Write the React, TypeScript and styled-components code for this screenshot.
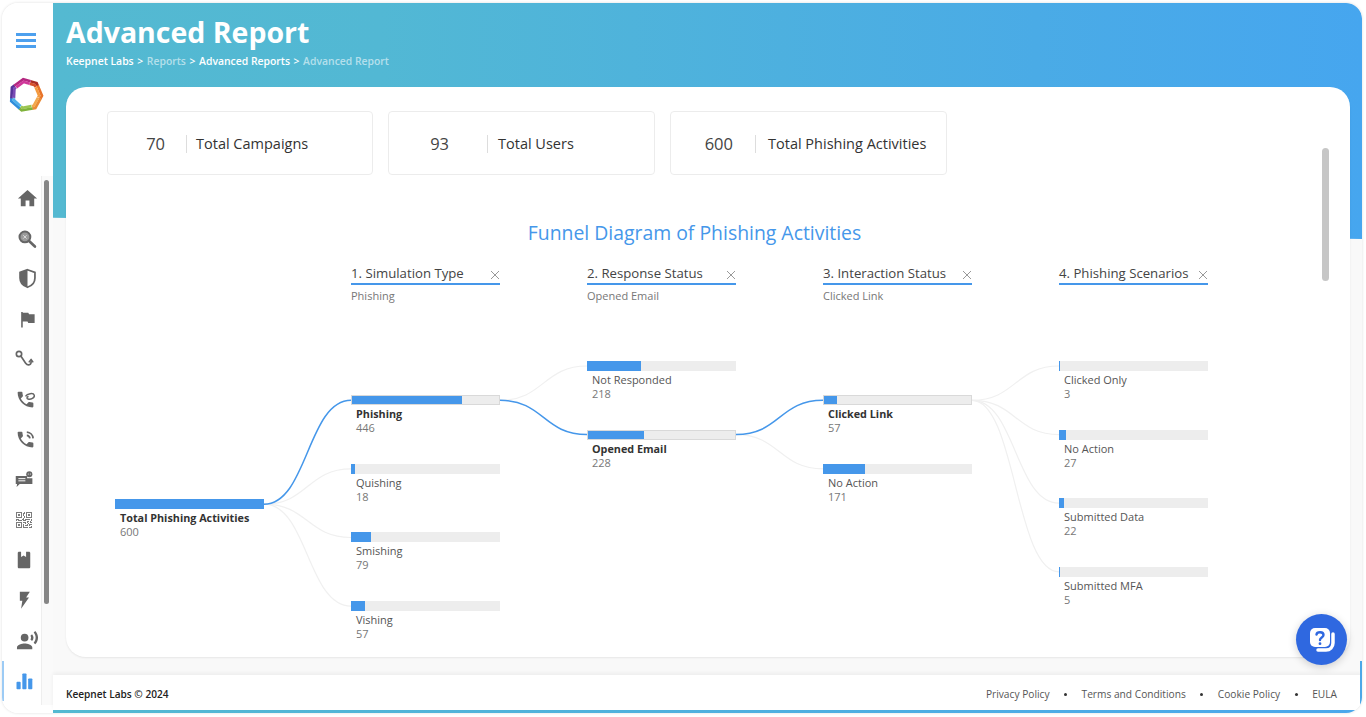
import React from "react";
import styled, { createGlobalStyle } from "styled-components";
import { MdHome, MdPhoneInTalk, MdRecordVoiceOver } from "react-icons/md";
import { BsQrCode } from "react-icons/bs";

const Global = createGlobalStyle`
  html, body { margin: 0; padding: 0; background: #fff; height: 100%; overflow: hidden; }
  * { box-sizing: border-box; }
  body { font-family: "Open Sans", "Noto Sans", sans-serif; }
`;

const UI = `"Open Sans", "Noto Sans", sans-serif`;
const Blue = "#4597ea";

const Screen = styled.div`
  width: 1366px;
  height: 717px;
  padding: 3px 4px 4px 2px;
`;
const Frame = styled.div`
  position: relative;
  display: flex;
  height: 710px;
  background: #fff;
  border-radius: 16px;
  box-shadow: 0 0 3px rgba(0, 0, 0, 0.14);
  overflow: hidden;
`;
const Sidebar = styled.aside`
  position: relative;
  flex: 0 0 51px;
  display: flex;
  flex-direction: column;
  background: #fff;
`;
const MenuButton = styled.button`
  display: flex;
  flex-direction: column;
  gap: 3.5px;
  width: 20px;
  margin: 30px 0 0 14px;
  padding: 0;
  border: 0;
  background: none;
`;
const MenuLine = styled.span`
  display: block;
  height: 2.5px;
  background: #4da0ee;
`;
const LogoBox = styled.div`
  margin: 28px 0 0 5px;
  width: 38px;
  height: 38px;
`;
const Nav = styled.nav`
  position: relative;
  display: flex;
  flex-direction: column;
  margin-top: 65px;
  height: 527px;
  width: 44px;
`;
const NavItem = styled.div<{ $active?: boolean; $shift: number }>`
  flex: 0 0 40.2px;
  display: flex;
  align-items: center;
  justify-content: center;
  padding-left: ${(p) => p.$shift * 2}px;
  color: ${(p) => (p.$active ? Blue : "#666")};
  position: relative;
  ${(p) => p.$active && `&::before { content: ""; position: absolute; left: 0; top: 0; bottom: 0; width: 2px; background: #9ccbf5; }`}
`;
const SideTrack = styled.div`
  position: absolute;
  left: 39px;
  top: 173px;
  bottom: 8px;
  width: 12px;
  background: #fafafa;
  border-left: 1px solid #eee;
`;
const SideThumb = styled.div`
  position: absolute;
  left: 42px;
  top: 177px;
  width: 5px;
  height: 424px;
  border-radius: 3px;
  background: #868686;
`;
const Main = styled.main`
  position: relative;
  flex: 1;
  display: flex;
  flex-direction: column;
  min-width: 0;
  background: #f9f9f9;
`;
const Banner = styled.div`
  position: absolute;
  left: 0;
  top: 0;
  right: 0;
  height: 236px;
  background: linear-gradient(90deg, #54b9d1 0%, #52b8d4 25%, #4aabe6 75%, #46a6ef 100%);
  border-top-right-radius: 15px;
  clip-path: polygon(0 0, 100% 0, 100% 100%, 0 91%);
`;
const Heading = styled.header`
  position: relative;
  flex: 0 0 84px;
  padding: 11px 0 0 13px;
  color: #fff;
`;
const Title = styled.h1`
  margin: 0;
  font: 700 28.5px/36px ${UI};
`;
const Crumbs = styled.div`
  display: flex;
  align-items: center;
  gap: 3.6px;
  margin-top: 4px;
  font: 600 10.4px/14px ${UI};
`;
const Crumb = styled.span<{ $muted?: boolean }>`
  color: ${(p) => (p.$muted ? "rgba(255,255,255,.58)" : "#fff")};
`;
const Card = styled.section`
  position: relative;
  flex: 0 0 570px;
  margin: 0 12px 0 13px;
  padding: 24px 0 0 41px;
  background: #fff;
  border-radius: 20px;
  box-shadow: 0 1px 2px rgba(0, 0, 0, 0.08);
`;
const Stats = styled.div`
  display: flex;
  gap: 15px;
`;
const Stat = styled.div<{ $w: number; $num: number; $pad: number; $gap: number }>`
  display: flex;
  align-items: center;
  width: ${(p) => p.$w}px;
  height: 64px;
  padding-top: 2px;
  border: 1px solid #ececec;
  border-radius: 4px;
  color: #333;
  font: 400 14.5px/20px ${UI};
  & > b {
    flex: 0 0 ${(p) => p.$num}px;
    padding-right: ${(p) => p.$pad}px;
    text-align: right;
    font-weight: 400;
    font-size: 16.5px;
    color: #444;
  }
  & > i {
    margin-right: ${(p) => p.$gap}px;
  }
`;
const StatRule = styled.i`
  flex: 0 0 1px;
  height: 18px;
  background: #ddd;
`;
const ChartTitle = styled.h2`
  margin: 45px 0 0;
  width: 1175px;
  text-align: center;
  color: ${Blue};
  font: 400 19.4px/26px ${UI};
`;
const Chart = styled.div`
  position: relative;
  display: flex;
  gap: 87px;
  margin: 16px 0 0 8px;
  height: 376px;
  width: 1140px;
  overflow: hidden;
`;
const Links = styled.svg`
  position: absolute;
  left: 0;
  top: 0;
`;
const Column = styled.div`
  position: relative;
  flex: 0 0 149px;
`;
const ColumnHead = styled.div`
  height: 99px;
  padding-top: 1px;
`;
const ColumnName = styled.div`
  display: flex;
  align-items: center;
  justify-content: space-between;
  height: 20px;
  border-bottom: 2px solid ${Blue};
  color: #444;
  font: 400 13.2px/18px ${UI};
  box-sizing: content-box;
`;
const Close = styled.span`
  display: flex;
  margin-top: 3px;
  color: #999;
`;
const ColumnValue = styled.div`
  margin-top: 3px;
  color: #777;
  font: 400 11px/16px ${UI};
`;
const NodeList = styled.div<{ $offset: number }>`
  display: flex;
  flex-direction: column;
  padding-top: ${(p) => p.$offset}px;
`;
const Node = styled.div`
  flex: 0 0 68.6px;
  height: 68.6px;
`;
const Track = styled.div<{ $selected?: boolean }>`
  height: 10px;
  background: #ededed;
  ${(p) => p.$selected && `outline: 1.5px solid #d9d9d9; outline-offset: -1px;`}
`;
const Fill = styled.div`
  height: 100%;
  background: ${Blue};
`;
const NodeLabel = styled.div<{ $selected?: boolean }>`
  margin-top: 2px;
  padding-left: 5px;
  font: ${(p) => (p.$selected ? 700 : 400)} ${(p) => (p.$selected ? 10.8 : 11)}px/14px ${UI};
  color: ${(p) => (p.$selected ? "#333" : "#555")};
  white-space: nowrap;
`;
const NodeCount = styled.div`
  padding-left: 5px;
  color: #777;
  font: 400 11px/13px ${UI};
`;
const CardThumb = styled.div`
  position: absolute;
  left: 1256px;
  top: 61px;
  width: 7px;
  height: 133px;
  border-radius: 4px;
  background: #c6c6c6;
`;
const Gutter = styled.div`
  flex: 0 0 18px;
`;
const Footer = styled.footer`
  position: relative;
  flex: 1;
  display: flex;
  align-items: center;
  justify-content: space-between;
  padding: 3px 25px 0 13px;
  background: #fff;
  box-shadow: 0 -2px 4px rgba(0, 0, 0, 0.05);
  color: #555;
  font: 400 10.2px/14px ${UI};
`;
const FooterBar = styled.div`
  flex: 0 0 3px;
  background: linear-gradient(90deg, #54b9d1 0%, #4ba8ec 100%);
`;
const Copyright = styled.strong`
  color: #222;
  font-weight: 600;
  font-size: 10.1px;
`;
const FooterLinks = styled.div`
  display: flex;
  align-items: center;
  gap: 14.5px;
`;
const Dot = styled.i`
  width: 3px;
  height: 3px;
  border-radius: 50%;
  background: #333;
`;
const Help = styled.button`
  position: absolute;
  left: 1294px;
  top: 611px;
  display: flex;
  align-items: center;
  justify-content: center;
  width: 51px;
  height: 51px;
  padding: 0;
  border: 0;
  border-radius: 50%;
  background: #2f68e0;
  box-shadow: 0 2px 8px rgba(0, 0, 0, 0.18);
`;
const EdgeLine = styled.div`
  position: absolute;
  right: 0;
  top: 658px;
  width: 2px;
  height: 49px;
  background: #4ba8e8;
`;

const Logo = () => {
  const colors: [string, string][] = [
    ["#a92d25", "#d6502c"],
    ["#e8742a", "#f39a3f"],
    ["#e98a36", "#f2a84e"],
    ["#7fb23b", "#9cc653"],
    ["#2f8edb", "#4fb0ea"],
    ["#55349a", "#7a4bb5"],
    ["#b42780", "#d0379a"],
  ];
  const v = (i: number, r: number) => {
    const a = ((i * 360) / 7 - 100) * (Math.PI / 180);
    return [19 + r * Math.cos(a), 19 + r * Math.sin(a)];
  };
  const seg = (i: number, r: number) => {
    const a = v(i, r);
    const b = v(i + 1, r);
    const d = v(i + 2, r);
    const mid = [b[0] + (d[0] - b[0]) * 0.55, b[1] + (d[1] - b[1]) * 0.55];
    const st = [a[0] + (b[0] - a[0]) * 0.2, a[1] + (b[1] - a[1]) * 0.2];
    return `${st.join(",")} ${b.join(",")} ${mid.join(",")}`;
  };
  return (
    <svg width="38" height="38" viewBox="0 0 38 38" fill="none">
      {colors.map((c, i) => (
        <g key={i}>
          <polyline points={seg(i, 14.6)} stroke="#fff" strokeWidth="6.4" />
          <polyline points={seg(i, 16)} stroke={c[0]} strokeWidth="2.7" />
          <polyline points={seg(i, 13.2)} stroke={c[1]} strokeWidth="2.7" />
        </g>
      ))}
    </svg>
  );
};

const Ico = ({ children, w = 20 }: { children: React.ReactNode; w?: number }) => (
  <svg width={w} height={w} viewBox="0 0 24 24" fill="currentColor">
    {children}
  </svg>
);

const phone =
  "M6.62 10.79c1.44 2.83 3.76 5.14 6.59 6.59l2.2-2.2c.27-.27.67-.36 1.02-.24 1.12.37 2.33.57 3.57.57.55 0 1 .45 1 1V20c0 .55-.45 1-1 1-9.39 0-17-7.61-17-17 0-.55.45-1 1-1h3.5c.55 0 1 .45 1 1 0 1.25.2 2.45.57 3.57.11.35.03.74-.25 1.02l-2.2 2.2z";

const navIcons: { icon: React.ReactNode; shift: number }[] = [
  { icon: <MdHome size={23} />, shift: 3 },
  {
    icon: (
      <Ico>
        <circle cx="9.5" cy="9.5" r="6.5" fill="#9a9a9a" stroke="currentColor" strokeWidth="2.4" />
        <path d="M7.5 7.5l4 4m0-4l-4 4" stroke="#ddd" strokeWidth="1.2" />
        <path d="M14.5 14.5l7 6.5" stroke="currentColor" strokeWidth="3.2" strokeLinecap="round" />
      </Ico>
    ),
    shift: 3,
  },
  {
    icon: (
      <Ico w={21}>
        <path d="M12 2l8.5 3v6.5c0 5-3.5 9-8.5 10.5-5-1.500-8.500-5.500-8.500-10.500V5z" fill="none" stroke="currentColor" strokeWidth="2" />
        <path d="M12 2L3.500 5v6.500C3.500 16.500 7 20.500 12 22z" />
      </Ico>
    ),
    shift: 3,
  },
  {
    icon: (
      <Ico w={19}>
        <path d="M4 2.500h2V22H4zM6 3.500h7l1 2h7v11h-8l-1-2H6z" />
      </Ico>
    ),
    shift: 3,
  },
  {
    icon: (
      <Ico w={20}>
        <circle cx="6" cy="6" r="3.200" fill="none" stroke="currentColor" strokeWidth="2" />
        <path d="M8.200 8.500L14 17c2.500 3.500 7 2.500 6.500-2.500" fill="none" stroke="currentColor" strokeWidth="2" strokeLinecap="round" />
        <path d="M17.800 16l2.700-3.500 2.500 3.500" fill="none" stroke="currentColor" strokeWidth="1.800" strokeLinejoin="round" />
      </Ico>
    ),
    shift: 0,
  },
  {
    icon: (
      <Ico w={21}>
        <path d={phone} />
        <path d="M12 8.500c2-3.500 9-4.500 10-1.500.8 2.800-4 5.500-7 4.500-2-.7-1.500-3 .5-3" fill="none" stroke="currentColor" strokeWidth="1.700" />
      </Ico>
    ),
    shift: 1,
  },
  {
    icon: (
      <Ico w={21}>
        <path d={phone} />
        <path d="M13.500 3.500c4 .3 7 3.300 7.200 7.200M13.500 7.300c2 .2 3.300 1.500 3.500 3.500" fill="none" stroke="currentColor" strokeWidth="2" />
      </Ico>
    ),
    shift: 1,
  },
  {
    icon: (
      <Ico w={21}>
        <path d="M2 8h13v2.500h6V17H6.500L3 20.500 3.500 17H2z" />
        <path d="M5 11h8M5 13.500h8" stroke="#fff" strokeWidth="1.100" />
        <circle cx="17.500" cy="6" r="3.500" />
        <circle cx="16.300" cy="5.700" r=".6" fill="#fff" />
        <circle cx="18.700" cy="5.700" r=".6" fill="#fff" />
      </Ico>
    ),
    shift: -1,
  },
  { icon: <BsQrCode size={16} opacity={0.85} />, shift: -1 },
  {
    icon: (
      <Ico w={20}>
        <path d="M4.500 3.500C4.500 2.700 5.200 2 6 2h2.500v6.500L11.500 6.500 14.500 8.500V2H18c.8 0 1.500.7 1.500 1.500V20.500c0 .8-.7 1.500-1.500 1.500H6c-.8 0-1.500-.7-1.500-1.500z" />
      </Ico>
    ),
    shift: -1,
  },
  {
    icon: (
      <Ico w={20}>
        <path d="M7 2h12l-4.500 7H18L8.500 22.500 10 13H7z" />
      </Ico>
    ),
    shift: -1,
  },
  { icon: <MdRecordVoiceOver size={23} />, shift: 3 },
  {
    icon: (
      <Ico w={20}>
        <rect x="3" y="13" width="5" height="9" rx="1" />
        <rect x="10" y="3" width="5" height="19" rx="1" />
        <rect x="17" y="9" width="5" height="13" rx="1" />
      </Ico>
    ),
    shift: -1,
  },
];

const ROW = 68.6;
type N = { label: string; value: number; selected?: boolean };
type C = { name?: string; sub?: string; offset: number; nodes: N[] };
const HEAD = 99;
const columns: C[] = [
  { offset: 237.2, nodes: [{ label: "Total Phishing Activities", value: 600, selected: true }] },
  {
    name: "1. Simulation Type",
    sub: "Phishing",
    offset: 34.3,
    nodes: [
      { label: "Phishing", value: 446, selected: true },
      { label: "Quishing", value: 18 },
      { label: "Smishing", value: 79 },
      { label: "Vishing", value: 57 },
    ],
  },
  {
    name: "2. Response Status",
    sub: "Opened Email",
    offset: 0,
    nodes: [
      { label: "Not Responded", value: 218 },
      { label: "Opened Email", value: 228, selected: true },
    ],
  },
  {
    name: "3. Interaction Status",
    sub: "Clicked Link",
    offset: 34.3,
    nodes: [
      { label: "Clicked Link", value: 57, selected: true },
      { label: "No Action", value: 171 },
    ],
  },
  {
    name: "4. Phishing Scenarios",
    offset: 0,
    nodes: [
      { label: "Clicked Only", value: 3 },
      { label: "No Action", value: 27 },
      { label: "Submitted Data", value: 22 },
      { label: "Submitted MFA", value: 5 },
    ],
  },
];

const nodeY = (c: C, i: number) => (c.name ? HEAD : 0) + c.offset + i * ROW + 5;
const links = columns.slice(0, -1).flatMap((c, ci) => {
  const si = c.nodes.findIndex((n) => n.selected);
  const x1 = ci * 236 + 149;
  const x2 = (ci + 1) * 236;
  const y1 = nodeY(c, si);
  const next = columns[ci + 1];
  return next.nodes.map((n, i) => {
    const y2 = nodeY(next, i);
    const m = (x1 + x2) / 2;
    return { d: `M${x1} ${y1}C${m} ${y1} ${m} ${y2} ${x2} ${y2}`, on: !!n.selected };
  });
});

const X = () => (
  <svg width="10" height="10" viewBox="0 0 10 10">
    <path d="M1 1l8 8M9 1l-8 8" stroke="currentColor" strokeWidth="1" />
  </svg>
);

export default function App() {
  return (
    <Screen>
      <Global />
      <Frame>
        <Sidebar>
          <SideTrack />
          <MenuButton aria-label="Menu">
            <MenuLine />
            <MenuLine />
            <MenuLine />
          </MenuButton>
          <LogoBox>
            <Logo />
          </LogoBox>
          <Nav>
            {navIcons.map((n, i) => (
              <NavItem key={i} $shift={n.shift} $active={i === navIcons.length - 1}>
                {n.icon}
              </NavItem>
            ))}
          </Nav>
          <SideThumb />
        </Sidebar>
        <Main>
          <Banner />
          <Heading>
            <Title>Advanced Report</Title>
            <Crumbs>
              <Crumb>Keepnet Labs</Crumb>
              <Crumb>&gt;</Crumb>
              <Crumb $muted>Reports</Crumb>
              <Crumb>&gt;</Crumb>
              <Crumb>Advanced Reports</Crumb>
              <Crumb>&gt;</Crumb>
              <Crumb $muted>Advanced Report</Crumb>
            </Crumbs>
          </Heading>
          <Card>
            <Stats>
              <Stat $w={266} $num={78} $pad={21} $gap={9}>
                <b>70</b>
                <StatRule />
                Total Campaigns
              </Stat>
              <Stat $w={267} $num={98} $pad={38} $gap={10}>
                <b>93</b>
                <StatRule />
                Total Users
              </Stat>
              <Stat $w={277} $num={84} $pad={22} $gap={12}>
                <b>600</b>
                <StatRule />
                Total Phishing Activities
              </Stat>
            </Stats>
            <ChartTitle>Funnel Diagram of Phishing Activities</ChartTitle>
            <Chart>
              <Links width="1140" height="376" viewBox="0 0 1140 376" fill="none">
                {links
                  .filter((l) => !l.on)
                  .map((l, i) => (
                    <path key={i} d={l.d} stroke="#f0f0f0" strokeWidth="1.2" />
                  ))}
                {links
                  .filter((l) => l.on)
                  .map((l, i) => (
                    <path key={i} d={l.d} stroke={Blue} strokeWidth="1.5" />
                  ))}
              </Links>
              {columns.map((c, ci) => (
                <Column key={ci}>
                  {c.name && (
                    <ColumnHead>
                      <ColumnName>
                        {c.name}
                        <Close>
                          <X />
                        </Close>
                      </ColumnName>
                      {c.sub && <ColumnValue>{c.sub}</ColumnValue>}
                    </ColumnHead>
                  )}
                  <NodeList $offset={c.offset}>
                    {c.nodes.map((n) => (
                      <Node key={n.label}>
                        <Track $selected={n.selected && ci > 0}>
                          <Fill style={{ width: `${(n.value / 600) * 100}%` }} />
                        </Track>
                        <NodeLabel $selected={n.selected}>{n.label}</NodeLabel>
                        <NodeCount>{n.value}</NodeCount>
                      </Node>
                    ))}
                  </NodeList>
                </Column>
              ))}
            </Chart>
            <CardThumb />
          </Card>
          <Gutter />
          <Footer>
            <Copyright>Keepnet Labs © 2024</Copyright>
            <FooterLinks>
              <span>Privacy Policy</span>
              <Dot />
              <span>Terms and Conditions</span>
              <Dot />
              <span>Cookie Policy</span>
              <Dot />
              <span>EULA</span>
            </FooterLinks>
          </Footer>
          <FooterBar />
          <EdgeLine />
        </Main>
        <Help aria-label="Help">
          <svg width="30" height="30" viewBox="0 0 30 30">
            <path d="M26 9v9c0 4-3 7-7 7h-8" fill="none" stroke="#fff" strokeWidth="3.5" strokeLinecap="round" />
            <rect x="3" y="3" width="20" height="19" rx="5" fill="#fff" />
            <path d="M9.500 9.500c.5-3 7-3.200 7 .5 0 2.500-3.500 2.500-3.500 5" fill="none" stroke="#2f68e0" strokeWidth="2.4" strokeLinecap="round" />
            <circle cx="13" cy="18.700" r="1.400" fill="#2f68e0" />
          </svg>
        </Help>
      </Frame>
    </Screen>
  );
}
